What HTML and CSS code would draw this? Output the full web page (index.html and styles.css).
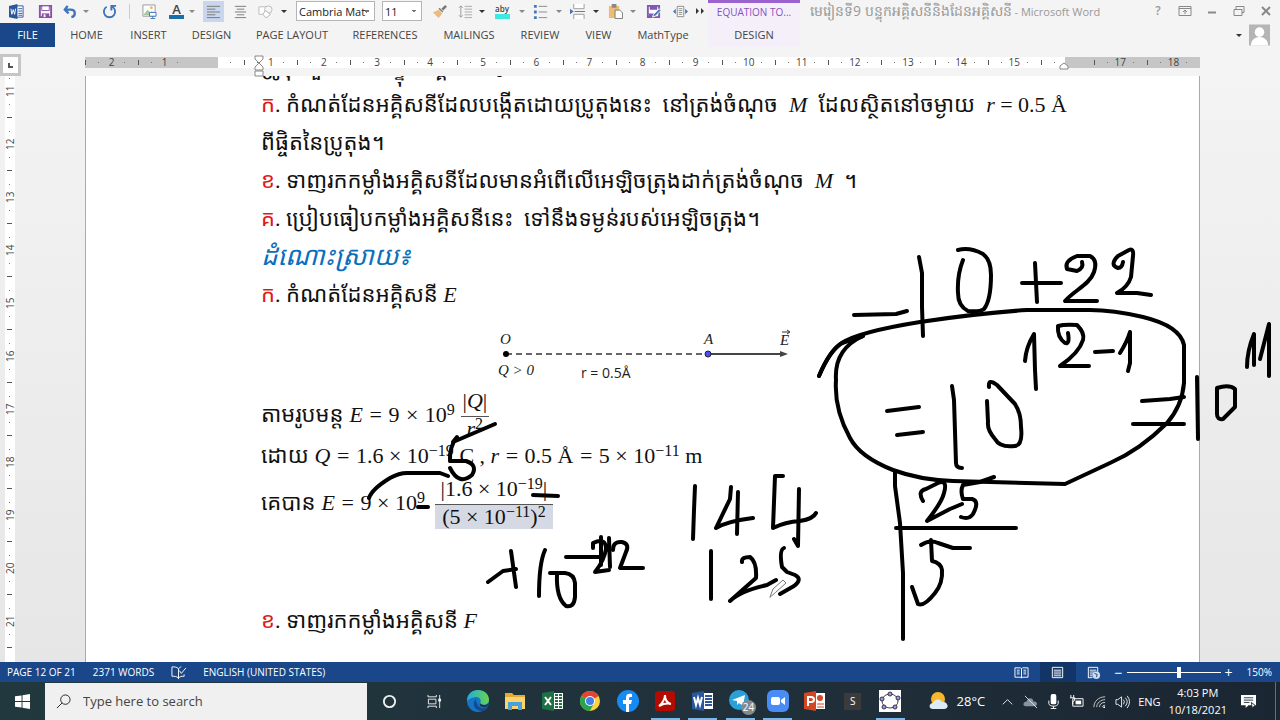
FILE: index.html
```
<!DOCTYPE html>
<html lang="km">
<head>
    <meta charset="UTF-8">
    <meta name="viewport" content="width=device-width, initial-scale=1.0">
    <title>មេរៀនទី9 - Microsoft Word</title>
    <link rel="stylesheet" href="styles.css">
</head>
<body>
    <!-- Quick access toolbar and title -->
    <header class="titlebar">
        <svg class="icon" viewBox="0 0 16 16"><path d="M8 2h7v12H8z" fill="#fff" stroke="#2b579a"/><path d="M10 5h4M10 7.500h4M10 10h4M10 12h4" stroke="#2b579a"/><path d="M0 2l9-2v16l-9-2z" fill="#2b579a"/><path d="M2 5l1 6 1.500-5L6 11l1-6" fill="none" stroke="#fff"/></svg>
        <button class="tool" aria-label="Save"><svg class="icon" viewBox="0 0 16 16"><path d="M2 2h12v12H2z" fill="#fff" stroke="#8a4fa8" stroke-width="2"/><path d="M4 2h8v5H4z" fill="#fff" stroke="#8a4fa8"/><path d="M4 10h8v4H4z" fill="#8a4fa8"/><path d="M6 11h2v3H6z" fill="#fff"/></svg></button>
        <button class="tool" aria-label="Undo"><svg class="icon" viewBox="0 0 16 16"><path d="M6 2L3 6l4 4M3 6h6c6 0 6 7 1 8" fill="none" stroke="#3f74b8" stroke-width="2.500"/></svg></button>
        <span class="caret"></span>
        <button class="tool" aria-label="Redo"><svg class="icon" viewBox="0 0 16 16"><path d="M5 3a6 6 0 1 0 6 0M10 7V2h5" fill="none" stroke="#3f74b8" stroke-width="2"/></svg></button>
        <span class="divider"></span>
        <button class="tool" aria-label="Picture"><svg class="icon" viewBox="0 0 16 16"><path d="M1 1h13v12H1z" fill="#fff" stroke="#999"/><path d="M2 11l4-5 3 3 2-2v5H2z" fill="#a5c9a0"/><circle cx="10" cy="4" r="1.500" fill="#e5b96d"/><path d="M8 9h7v4H8zM11.500 13v2M9 15.500h5" fill="#fff" stroke="#3f74b8"/></svg></button>
        <button class="tool font-color" aria-label="Font color">A</button>
        <span class="caret"></span>
        <button class="tool pressed" aria-label="Align left"><svg class="icon" viewBox="0 0 16 16"><path d="M1 2.500h14M1 5.500h9M1 8.500h14M1 11.500h9M1 14.500h14" stroke="#777"/></svg></button>
        <button class="tool" aria-label="Center"><svg class="icon" viewBox="0 0 16 16"><path d="M2 2.500h12M4 5.500h8M2 8.500h12M4 11.500h8M2 14.500h12" stroke="#777"/></svg></button>
        <button class="tool" aria-label="Shapes"><svg class="icon" viewBox="0 0 16 16"><path d="M1 3h8v8H1z" fill="#fff" stroke="#bbb"/><circle cx="11" cy="6" r="4" fill="#f5f5f5" stroke="#bbb"/><path d="M8 7l5 4-4 4-4-4z" fill="#fff" stroke="#aaa"/></svg></button>
        <span class="caret dark"></span>
        <select class="font-name" aria-label="Font"><option>Cambria Mat</option></select>
        <select class="font-size" aria-label="Font size"><option>11</option></select>
        <button class="tool" aria-label="Format painter"><svg class="icon" viewBox="0 0 16 16"><path d="M1 9l6-3 4 4-4 5z" fill="#e8bd7a"/><path d="M7 5l4 4 1-1-4-4zM10 5l4-4 2 2-4 4z" fill="#777"/></svg></button>
        <button class="tool" aria-label="Line spacing"><svg class="icon" viewBox="0 0 16 16"><path d="M3 2v12M1 4l2-2 2 2M1 12l2 2 2-2" fill="none" stroke="#999"/><path d="M7 2.500h8M7 5.500h8M7 8.500h8M7 11.500h8M7 14.500h8" stroke="#aaa"/></svg></button>
        <span class="caret dark"></span>
        <button class="tool highlight" aria-label="Highlight">aby</button>
        <span class="caret"></span>
        <button class="tool" aria-label="Bullets"><svg class="icon" viewBox="0 0 16 16"><path d="M1 1h3v3H1zM1 7h3v3H1zM1 13h3v3H1z" fill="#4a78b5"/><path d="M6 2.500h9M6 8.500h9M6 14.500h9" stroke="#888"/></svg></button>
        <span class="caret"></span>
        <button class="tool" aria-label="Breaks"><svg class="icon" viewBox="0 0 16 16"><path d="M4 0v5h11V0M4 16v-5h11v5" fill="#fff" stroke="#999"/><path d="M5 8h11" stroke="#4a78b5"/><path d="M0 5l4 3-4 3z" fill="#4a78b5"/></svg></button>
        <span class="caret dark"></span>
        <button class="tool" aria-label="Paste"><svg class="icon" viewBox="0 0 16 16"><path d="M1 2h11v13H1z" fill="#eebc74"/><path d="M4 0h5v4H4z" fill="#888"/><path d="M7.500 6.500h5l3 3v6h-8z" fill="#fff" stroke="#777"/></svg></button>
        <span class="caret"></span>
        <button class="tool" aria-label="Save as"><svg class="icon" viewBox="0 0 16 16"><path d="M2 2h12v12H2z" fill="#fff" stroke="#8355b5" stroke-width="2"/><path d="M4 2h8v4H4zM3 10h6v4H3z" fill="#8355b5"/><path d="M7 14l1-3 6-6 2 2-6 6z" fill="#4a78b5" stroke="#fff"/></svg></button>
        <button class="tool" aria-label="Page width"><svg class="icon" viewBox="0 0 16 16"><path d="M4.500 2.500h7v11h-7z" fill="#fff" stroke="#888"/><path d="M6 5h4M6 7h4M6 9h4M6 11h4" stroke="#888"/><path d="M3 5v6L0 8zM13 5v6l3-3z" fill="#4a78b5"/></svg></button>
        <button class="tool" aria-label="More"><svg class="icon small" viewBox="0 0 10 10"><path d="M1 2l3 3-3 3zM6 2l3 3-3 3z" fill="#333"/></svg></button>
        <span class="context-title">EQUATION TO...</span>
        <div class="title-area">
            <span class="doc-title"><span class="khmer">មេរៀនទី9 បន្ទុកអគ្គិសនីនិងដែនអគ្គិសនី</span> - Microsoft Word</span>
            <div class="window-buttons">
                <button class="tool help" aria-label="Help">?</button>
                <button class="tool" aria-label="Ribbon options"><svg class="icon" viewBox="0 0 14 14"><path d="M1 2.500h12v9H1zM1 4.500h12M7 10V6M5 8l2-2 2 2" fill="none" stroke="#888"/></svg></button>
                <button class="tool" aria-label="Minimize"><svg class="icon" viewBox="0 0 14 14"><path d="M3 8.500h8" stroke="#888" stroke-width="2"/></svg></button>
                <button class="tool" aria-label="Restore"><svg class="icon" viewBox="0 0 14 14"><path d="M2 5.500h8v6H2zM4 5V2.500h8v6h-2" fill="none" stroke="#888"/></svg></button>
                <button class="tool" aria-label="Close"><svg class="icon" viewBox="0 0 14 14"><path d="M3 3l8 8M11 3l-8 8" stroke="#888" stroke-width="2"/></svg></button>
            </div>
        </div>
    </header>

    <!-- Ribbon tabs -->
    <nav class="tabs">
        <a class="file" href="#">FILE</a>
        <a href="#">HOME</a>
        <a href="#">INSERT</a>
        <a href="#">DESIGN</a>
        <a href="#">PAGE LAYOUT</a>
        <a href="#">REFERENCES</a>
        <a href="#">MAILINGS</a>
        <a href="#">REVIEW</a>
        <a href="#">VIEW</a>
        <a href="#">MathType</a>
        <a class="context-tab" href="#">DESIGN</a>
        <div class="account">
            <span class="caret dark"></span>
            <svg class="avatar" viewBox="0 0 22 22"><path d="M0 0h22v22H0z" fill="#b5b5b5"/><circle cx="11" cy="8" r="5" fill="#fff"/><path d="M2 22c0-12 18-12 18 0z" fill="#fff"/></svg>
        </div>
    </nav>

    <main class="workspace">
        <div class="ruler-row">
            <div class="tab-stop"><span></span></div>
            <div class="ruler">
                <span class="shade">2</span><span class="shade">1</span><span class="shade-left">
                <svg class="indent" viewBox="0 0 10 22"><path d="M1 1h8v3L5 8l4 4v3H1v-3l4-4-4-4zM1 16h8v5H1z" fill="#fff" stroke="#888"/></svg></span><span>1</span><span>2</span><span>3</span><span>4</span><span>5</span><span>6</span><span>7</span><span>8</span><span>9</span><span>10</span><span>11</span><span>12</span><span>13</span><span>14</span><span>15</span><span class="shade-right">
                <svg class="indent-right" viewBox="0 0 10 8"><path d="M1 7V4l4-3 4 3v3z" fill="#fff" stroke="#888"/></svg></span><span class="shade">17</span><span class="shade">18</span>
            </div>
        </div>
        <div class="sheet-row">
            <div class="side-ruler">
                <span>11</span><span>12</span><span>13</span><span>14</span><span>15</span><span>16</span><span>17</span><span>18</span><span>19</span><span>20</span><span>21</span><span></span>
            </div>
            <article class="page">
                <p>ប្រូតុងមួយមានបន្ទុកអគ្គិសនី <i>Q</i></p>
                <p class="spread"><span><b>ក</b>. កំណត់ដែនអគ្គិសនីដែលបង្កើតដោយប្រូតុងនេះ</span> <span>នៅត្រង់ចំណុច</span> <i>M</i> <span>ដែលស្ថិតនៅចម្ងាយ</span> <span><i>r</i> = 0.5 Å</span></p>
                <p>ពីផ្ចិតនៃប្រូតុង។</p>
                <p><b>ខ</b>. ទាញរកកម្លាំងអគ្គិសនីដែលមានអំពើលើអេឡិចត្រុងដាក់ត្រង់ចំណុច&nbsp; <i>M</i>&nbsp; ។</p>
                <p><b>គ</b>. ប្រៀបធៀបកម្លាំងអគ្គិសនីនេះ&nbsp; ទៅនឹងទម្ងន់របស់អេឡិចត្រុង។</p>
                <p class="solution">ដំណោះស្រាយ៖</p>
                <p><b>ក</b>. កំណត់ដែនអគ្គិសនី <i>E</i></p>
                <svg class="diagram" viewBox="0 0 300 64">
                    <path d="M9 34h200" stroke="#666" stroke-width="2" stroke-dasharray="6 4"/>
                    <path d="M211 34h75" stroke="#444" stroke-width="2"/>
                    <path d="M283 31l8 3-8 3z" fill="#444"/>
                    <circle cx="9" cy="34" r="3" fill="#000"/>
                    <circle cx="211" cy="34" r="3" fill="#4d4dff" stroke="#223"/>
                    <text x="3" y="24" class="label">O</text>
                    <text x="1" y="55" class="label">Q &gt; 0</text>
                    <text x="207" y="24" class="label">A</text>
                    <text x="283" y="25" class="label">E</text>
                    <path d="M285 12h7M290 10l3 2-3 2" fill="none" stroke="#333"/>
                    <text x="84" y="58" class="distance">r = 0.5Å</text>
                </svg>
                <div class="formula">តាមរូបមន្ត <span class="math"><i>E</i> <span class="op">=</span> 9 <span class="op">×</span> 10<sup>9</sup></span>
                    <span class="fraction short"><span>|<i>Q</i>|</span><span><i>r</i><sup>2</sup></span></span>
                </div>
                <div class="formula given">ដោយ <span class="math"><i>Q</i> <span class="op">=</span> 1.6 × 10<sup>−19</sup> C , <i>r</i> <span class="op">=</span> 0.5 Å <span class="op">=</span> 5 × 10<sup>−11</sup> m</span></div>
                <div class="formula result">គេបាន <span class="math"><i>E</i> <span class="op">=</span> 9 × 10<sup>9</sup></span>
                    <span class="fraction wide"><span>|1.6 × 10<sup>−19</sup>|</span><span class="selected">(5 × 10<sup>−11</sup>)<sup>2</sup></span></span>
                </div>
                <p class="next"><b>ខ</b>. ទាញរកកម្លាំងអគ្គិសនី <i>F</i></p>
            </article>
        </div>
    </main>

    <!-- Word status bar -->
    <footer class="status">
        <span>PAGE 12 OF 21</span>
        <span>2371 WORDS</span>
        <svg class="icon" viewBox="0 0 16 16"><path d="M8 4v11M8 4C6 2 4 2 1 2v10c3 0 5 0 7 2 2-2 3-2 6-2v-2M8 4c1-1 2-2 3-2" fill="none" stroke="#fff"/><path d="M9 6l2 3 5-6" fill="none" stroke="#fff"/></svg>
        <span>ENGLISH (UNITED STATES)</span>
        <div class="view-controls">
            <button aria-label="Read mode"><svg class="icon" viewBox="0 0 16 16"><path d="M8 4v10M1 3h6l1 1 1-1h6v10H9l-1 1-1-1H1zM3 5.500h3M3 7.500h3M3 9.500h3M10 5.500h3M10 7.500h3M10 9.500h3" fill="none" stroke="#fff"/></svg></button>
            <button class="current" aria-label="Print layout"><svg class="icon" viewBox="0 0 16 16"><path d="M2.500 2.500h11v11h-11zM4 5.500h8M4 7.500h8M4 9.500h8M4 11.500h8" fill="none" stroke="#fff"/></svg></button>
            <button aria-label="Web layout"><svg class="icon" viewBox="0 0 16 16"><path d="M2.500 13.500v-11h10v5M4 5.500h7M4 7.500h6M4 9.500h4M4 11.500h3M2 13.500h5" fill="none" stroke="#fff"/><circle cx="11" cy="11" r="4" fill="#cfdcf0"/><path d="M9 9l3 1-1 3" fill="none" stroke="#19478a"/></svg></button>
            <label class="zoom">− <input type="range" min="10" max="190" value="110" aria-label="Zoom"> +</label>
            <span class="percent">150%</span>
        </div>
    </footer>

    <!-- Windows taskbar -->
    <footer class="taskbar">
        <button class="start" aria-label="Start"><svg class="icon" viewBox="0 0 16 16"><path d="M0 2.500l7-1v6H0zM8 1.300l8-1.300v7.500H8zM0 8.500h7v6l-7-1zM8 8.500h8V16l-8-1.300z" fill="#fff"/></svg></button>
        <label class="search">
            <svg class="icon" viewBox="0 0 16 16"><circle cx="10" cy="6" r="5" fill="none" stroke="#222"/><path d="M6.500 9.500L1 15" stroke="#222"/></svg>
            <input type="text" placeholder="Type here to search" aria-label="Search">
        </label>
        <button class="system" aria-label="Cortana"><svg class="icon" viewBox="0 0 16 16"><circle cx="8" cy="8" r="6" fill="none" stroke="#eee" stroke-width="2"/></svg></button>
        <button class="system" aria-label="Task view"><svg class="icon" viewBox="0 0 16 16"><path d="M1 1v2h9V1M1.500 5.500h8v5h-8zM1 15v-2h9v2M13.500 1v14" fill="none" stroke="#eee"/><path d="M12 5h3v3h-3z" fill="#eee"/></svg></button>
        <div class="apps">
            <button aria-label="Edge"><svg viewBox="0 0 24 24"><defs><linearGradient id="edge" x2="1"><stop stop-color="#1dade0"/><stop offset="1" stop-color="#6bd44a"/></linearGradient></defs><circle cx="12" cy="12" r="11" fill="#1674c5"/><path d="M1 12C1-3 23-2 23 11c0 5-7 6-9 3 2-2 0-6-4-6-5 0-9 4-9 4z" fill="url(#edge)"/><path d="M10 10c-5 5-1 12 6 12 3 0 5-2 6-4-6 3-12 0-12-8z" fill="#124b94"/><path d="M14 14c2 3 8 3 9-1-1 4-2 5-4 5-4 1-6-2-5-4z" fill="#20323c"/></svg></button>
            <button aria-label="Files"><svg viewBox="0 0 24 24"><path d="M2 4h7l2 2h11v14H2z" fill="#e8a933"/><path d="M2 8h20v12H2z" fill="#fbd56c"/><path d="M5 13h14v8h-4v-4H9v4H5z" fill="#4b9fdd"/></svg></button>
            <button aria-label="Excel"><svg viewBox="0 0 24 24"><path d="M12 4h10v16H12z" fill="#fff"/><path d="M14 6h3M18 6h3M14 9h3M18 9h3M14 12h3M18 12h3M14 15h3M18 15h3M14 18h3M18 18h3" stroke="#217346" stroke-width="2"/><path d="M1 4l12-2v20L1 20z" fill="#1e7145"/><path d="M4 8l6 8M10 8l-6 8" stroke="#fff" stroke-width="2"/></svg></button>
            <button aria-label="Chrome"><svg viewBox="0 0 24 24"><circle cx="12" cy="12" r="10" fill="#fdd23c"/><path d="M12 12L3.300 7a10 10 0 0 1 17.400 0z" fill="#e44435"/><path d="M12 12L3.300 7A10 10 0 0 0 12 22l4-8z" fill="#2fa24f"/><circle cx="12" cy="12" r="5" fill="#fff"/><circle cx="12" cy="12" r="4" fill="#4380ea"/></svg></button>
            <button aria-label="Facebook"><svg viewBox="0 0 24 24"><circle cx="12" cy="12" r="11" fill="#168af5"/><path d="M10 23v-8H7v-4h3V9c0-4 2-5 6-4v3c-3 0-3 0-3 3h3l-1 4h-2v8z" fill="#fff"/></svg></button>
            <button class="open" aria-label="Acrobat"><svg viewBox="0 0 24 24"><rect x="2" y="2" width="20" height="20" rx="3" fill="#b30b00"/><path d="M6 17c3-2 6-7 6-11 0 4 2 8 6 9-4-1-8 0-12 2z" fill="none" stroke="#fff" stroke-width="2"/></svg></button>
            <button class="open" aria-label="Word"><svg viewBox="0 0 24 24"><path d="M12 4h10v16H12z" fill="#fff"/><path d="M14 7h7M14 10h7M14 13h7M14 16h7" stroke="#2b579a" stroke-width="2"/><path d="M1 4l12-2v20L1 20z" fill="#2b579a"/><path d="M3 8l2 8 2-7 2 7 2-8" fill="none" stroke="#fff" stroke-width="2"/></svg></button>
            <button class="open" aria-label="Telegram"><svg viewBox="0 0 24 24"><circle cx="11" cy="11" r="10" fill="#2ba0d8"/><path d="M4 11l13-5-2 11-4-3-2 2v-4z" fill="#fff"/></svg><span class="badge">24</span></button>
            <button class="open" aria-label="Zoom"><svg viewBox="0 0 24 24"><rect x="1" y="1" width="22" height="22" rx="6" fill="#4a8cf5"/><rect x="5" y="8" width="9" height="8" rx="2" fill="#fff"/><path d="M15 11l4-3v8l-4-3z" fill="#fff"/></svg></button>
            <button aria-label="PowerPoint"><svg viewBox="0 0 24 24"><path d="M12 4h10v16H12z" fill="#fff"/><circle cx="17" cy="9" r="3" fill="#d24726"/><path d="M14 15h7M14 18h7" stroke="#d24726"/><path d="M1 4l12-2v20L1 20z" fill="#d24726"/><path d="M5 17V8h3c4 0 4 5 0 5H5" fill="none" stroke="#fff" stroke-width="2"/></svg></button>
            <button aria-label="Sketchpad"><span class="letter">S</span></button>
            <button class="open" aria-label="GeoGebra"><svg viewBox="0 0 24 24"><path d="M1 1h22v22H1z" fill="#fff"/><ellipse cx="12" cy="12" rx="8" ry="7" fill="none" stroke="#444"/><g fill="#9a9af0" stroke="#334"><circle cx="12" cy="5" r="2"/><circle cx="20" cy="9" r="2"/><circle cx="17" cy="18" r="2"/><circle cx="6" cy="18" r="2"/><circle cx="4" cy="10" r="2"/></g></svg></button>
        </div>
        <div class="tray">
            <svg class="weather" viewBox="0 0 20 20"><circle cx="9" cy="8" r="7" fill="#f9b82c"/><path d="M4 18c-5 0-4-6 0-6 1-4 7-5 9-1 6-1 8 7 2 7z" fill="#dcebf7"/></svg>
            <span class="temperature">28°C</span>
            <svg class="icon" viewBox="0 0 16 16"><path d="M3 11l5-5 5 5" fill="none" stroke="#eee"/></svg>
            <svg class="icon" viewBox="0 0 16 16"><path d="M3 13c-4 0-3-5 1-5 1-5 7-4 7 0 5-1 5 5 1 5z" fill="#89939c"/><path d="M2 2l13 13" stroke="#ddd"/></svg>
            <svg class="icon" viewBox="0 0 16 16"><rect x="5" y="0" width="6" height="11" rx="2" fill="#fff"/><path d="M3 7v3c0 4 10 4 10 0V7M8 13v3M5 15.500h6" fill="none" stroke="#fff"/></svg>
            <svg class="icon" viewBox="0 0 16 16"><path d="M4 5h11v8H4zM2 1v3M5 1v3M1 4h5v3l-2 1v3" fill="none" stroke="#fff"/><path d="M7 7h6v4H7z" fill="#fff"/></svg>
            <svg class="icon" viewBox="0 0 16 16"><path d="M2 14C2 8 7 3 14 3M5 14c0-4 4-8 9-8M8 14c0-3 2-5 6-5M11 14c0-1 1-2 3-2" fill="none" stroke="#ccc"/><circle cx="13" cy="14" r="1" fill="#fff"/></svg>
            <svg class="icon" viewBox="0 0 16 16"><path d="M1 6h2l4-3v11l-4-3H1zM9 6q2 2 0 5M11 4q4 4 0 9M13 2q5 6 0 13" fill="none" stroke="#eee"/></svg>
            <span class="language">ENG</span>
            <time class="clock">4:03 PM<br>10/18/2021</time>
            <svg class="icon notice" viewBox="0 0 16 16"><path d="M0 1h16v11H8l-3 3v-3H0z" fill="#fff"/><path d="M3 4h10M3 6.500h10M3 9h6" stroke="#26343d"/><path d="M11 9l4 3-3 3z" fill="#fff" stroke="#26343d"/></svg>
            <span class="show-desktop"></span>
        </div>
    </footer>

    <!-- Pen strokes over the document -->
    <svg class="ink" viewBox="0 0 1280 720">
        <path d="M854 315L896 314 907 311M919 257L922 273 922 307 923 336"/>
        <path d="M958 250Q970 247 983 254Q991 260 991 275Q991 300 984 309Q980 312 968 311Q958 306 958 293Q957 275 963 260"/>
        <path d="M1022 283H1061M1035 263L1037 302"/>
        <path d="M1082 262Q1084 268 1077 271L1067 269Q1064 261 1077 256H1090Q1098 260 1094 272C1090 284 1075 290 1065 301H1097"/>
        <path d="M1123 262Q1122 268 1118 268Q1109 265 1118 256L1129 250Q1134 248 1133 256L1131 277Q1128 287 1117 293H1137L1151 295"/>
        <path d="M819 376Q830 350 842 343Q858 332 920 322Q980 313 1027 310H1090Q1113 310 1143 317Q1180 326 1184 345V383Q1182 406 1167 423Q1140 450 1110 463L1065 484L953 481Q920 480 893 470Q860 457 850 438Q834 409 836 380Q834 349 863 336"/>
        <path d="M819 376Q830 350 842 343L863 336"/>
        <path d="M887 411L919 407M897 435L923 432M952 386L954 400 956 463Q956 468 962 468"/>
        <path d="M989 387Q988 378 997 385L1015 404Q1021 413 1021 427Q1023 445 1015 446Q1000 448 995 439Q987 430 988 422L987 401"/>
        <path d="M1025 361Q1026 347 1034 334L1035 370 1036 389"/>
        <path d="M1068 333Q1070 345 1065 343Q1057 337 1058 326Q1065 324 1077 325Q1085 333 1083 340Q1079 353 1060 366H1089"/>
        <path d="M1095 352L1113 351M1120 353Q1127 342 1130 332V363L1128 371"/>
        <path d="M1142 401L1170 399 1184 397M1133 424H1184M1197 377L1198 439"/>
        <path d="M1217 388Q1229 384 1235 389V407L1223 419Q1217 420 1217 414ZM1247 367Q1247 351 1254 334V365M1260 359L1269 324V376"/>
        <path d="M695 486L694 510 693 539M731 487L730 499 716 528Q728 521 753 518M738 492L737 534"/>
        <path d="M783 476L775 476 773 528Q785 522 800 521Q813 519 816 513M799 489L798 546 794 539"/>
        <path d="M711 551V599M742 562Q741 557 750 557Q757 562 756 578L730 601Q740 591 767 585L776 580"/>
        <path d="M784 548Q779 550 782 567L787 572 795 575Q803 579 794 586L780 594"/>
        <path d="M895 472V486L900 523 903 573V639M896 528H1016"/>
        <path d="M923 501Q917 491 926 489L938 483Q948 479 944 493Q942 502 927 521L950 509 962 504"/>
        <path d="M994 477L980 482 963 485Q960 491 963 499H972Q980 501 973 514Q969 520 961 517"/>
        <path d="M970 548H953L938 543Q930 539 921 545M931 540L932 561Q941 563 942 570Q943 583 935 593Q924 607 918 604L912 587"/>
        <path d="M495 424L453 442 457 437Q449 447 450 461H466Q478 465 472 475Q459 486 450 468"/>
        <path d="M369 498Q372 489 390 478Q399 473 407 473H440L448 476M418 507H428M533 495L558 496"/>
        <path d="M488 582L503 571 516 569M511 551L516 587M545 550Q539 563 539 596"/>
        <path d="M550 573H565Q574 574 575 583V597Q574 608 566 606Q556 598 557 574"/>
        <path d="M566 557H603M593 548V543Q606 537 606 549Q604 561 595 572L609 570M601 537V565M609 538L610 567"/>
        <path d="M613 550Q613 541 622 542Q630 544 626 552L620 568H643"/>
        <path class="pencil" d="M770 597L773 589 783 580 786 583 776 592Z"/>
    </svg>
</body>
</html>
```
FILE: styles.css
```
* {
    box-sizing: border-box;
}
body {
    margin: 0;
    height: 100vh;
    display: flex;
    flex-direction: column;
    overflow: hidden;
    background-color: #f4f4f4;
    font-family: "Open Sans", "Noto Sans", sans-serif;
    font-size: 11px;
    color: #444;
}
button {
    border: none;
    padding: 0;
    background: none;
    font-family: inherit;
    color: inherit;
}
.icon {
    width: 15px;
    height: 15px;
    display: block;
    flex: none;
}
.icon.small {
    width: 10px;
    height: 10px;
}
.caret {
    border: 3px solid transparent;
    border-top-color: #888;
    border-bottom: none;
}
.caret.dark {
    border-top-color: #333;
}

/* Title bar */
.titlebar {
    height: 22px;
    flex: none;
    display: grid;
    grid-template-columns: 33px 24px 25px 7px 40px 1px 39px 15px 16px 27px 27px 23px 13px 91px 42px 32px 20px 14px 26px 14px 22px 16px 21px 15px 24px 11px 30px 24px 16px 92px 1fr;
    align-items: center;
    justify-items: center;
}
.divider {
    width: 1px;
    height: 15px;
    background-color: #ccc;
}
.font-color {
    width: 15px;
    border-bottom: 4px solid #1b6fa8;
    font-size: 13px;
    font-weight: 600;
    line-height: 12px;
}
.highlight {
    width: 15px;
    border-bottom: 5px solid #3fe8e0;
    font-size: 8px;
    font-weight: 600;
    line-height: 10px;
}
.pressed {
    padding: 3px;
    background-color: #c9d6ee;
}
.titlebar select {
    height: 20px;
    padding: 0 0 0 2px;
    border: 1px solid #b5b5b5;
    border-radius: 0;
    appearance: none;
    background-color: #fff;
    background-image: linear-gradient(45deg, transparent 50%, #777 50%), linear-gradient(-45deg, transparent 50%, #777 50%);
    background-repeat: no-repeat;
    background-size: 3px 3px;
    background-position: right 7px center, right 4px center;
    background-image: linear-gradient(45deg, transparent 50%, #777 50%), linear-gradient(-45deg, transparent 50%, #777 50%);
    color: #222;
    font-family: "Open Sans", sans-serif;
    font-size: 11px;
}
.font-name {
    width: 79px;
}
.font-size {
    width: 40px;
}
.context-title {
    width: 100%;
    height: 22px;
    border-top: 3px solid #9a62cf;
    background-color: #f5effa;
    color: #8a4fc0;
    font-size: 10px;
    line-height: 19px;
    text-align: center;
    white-space: nowrap;
}
.title-area {
    width: 100%;
    display: flex;
    align-items: center;
    justify-content: space-between;
    padding-left: 10px;
    white-space: nowrap;
}
.doc-title {
    color: #999;
    line-height: 20px;
}
.khmer {
    font-size: 14px;
}
.window-buttons {
    display: flex;
    gap: 13px;
    padding-right: 7px;
}
.window-buttons .icon {
    width: 14px;
    height: 14px;
}
.help {
    width: 14px;
    color: #999;
    font-size: 12px;
    line-height: 14px;
    font-weight: 600;
}

/* Ribbon tabs */
.tabs {
    height: 25px;
    flex: none;
    display: grid;
    grid-template-columns: 55px 63px 61px 65px 96px 90px 78px 64px 53px 76px 106px 1fr;
}
.tabs a {
    color: #444;
    text-align: center;
    text-decoration: none;
    line-height: 26px;
    white-space: nowrap;
}
.tabs .file {
    margin-top: 1px;
    background-color: #19478a;
    color: #fff;
    line-height: 24px;
}
.tabs .context-tab {
    margin: 0 7px;
    background-color: #f5effa;
}
.account {
    display: flex;
    align-items: center;
    justify-content: flex-end;
    gap: 7px;
    padding-right: 10px;
}
.avatar {
    width: 21px;
    height: 22px;
}

/* Rulers and page */
.workspace {
    flex: 1;
    min-height: 0;
    display: flex;
    flex-direction: column;
    background: linear-gradient(#f4f4f4, #e6e6e6);
}
.ruler-row {
    height: 29px;
    flex: none;
    display: flex;
    align-items: flex-end;
}
.tab-stop {
    width: 21px;
    height: 22px;
    border: 3px solid #c6c6c6;
    background-color: #fff;
    display: flex;
    align-items: center;
    justify-content: center;
}
.tab-stop span {
    width: 5px;
    height: 5px;
    border: solid #555;
    border-width: 0 0 2px 2px;
}
.ruler {
    flex: 1;
    height: 11px;
    margin: 0 80px 8px 64px;
    display: flex;
    background-color: #fff;
}
.ruler > span {
    flex: 1;
    display: flex;
    align-items: center;
    justify-content: center;
    background-image: linear-gradient(#555, #555), linear-gradient(#777, #777), linear-gradient(#777, #777);
    background-repeat: no-repeat;
    background-size: 1px 5px, 1px 1px, 1px 1px;
    background-position: left center, 25% center, 75% center;
    font-size: 10px;
    line-height: 11px;
}
.ruler .shade {
    background-color: #c6c6c6;
}
.ruler .shade-left {
    box-shadow: inset 27px 0 #c6c6c6;
}
.ruler .shade-right {
    box-shadow: inset -29px 0 #c6c6c6;
}
.indent {
    position: absolute;
    top: 55px;
    left: 254px;
    width: 10px;
    height: 22px;
}
.indent-right {
    width: 10px;
    height: 8px;
    margin: 6px 7px 0 0;
    flex: none;
}
.sheet-row {
    flex: 1;
    min-height: 0;
    display: flex;
    overflow: hidden;
}
.side-ruler {
    width: 10px;
    margin: -11px 70px 0 5px;
    flex: none;
    background-color: #fff;
}
.side-ruler span {
    height: 53px;
    display: flex;
    align-items: center;
    justify-content: center;
    writing-mode: vertical-rl;
    transform: rotate(180deg);
    background-image: linear-gradient(#555, #555), linear-gradient(#777, #777), linear-gradient(#777, #777);
    background-repeat: no-repeat;
    background-size: 5px 1px, 1px 1px, 1px 1px;
    background-position: center top, center 25%, center 75%;
    font-size: 10px;
    line-height: 10px;
}
.page {
    flex: 1;
    margin-right: 80px;
    padding: 0 132px 0 175px;
    border: solid #aaa;
    border-width: 0 1px;
    background-color: #fff;
    color: #111;
    font-family: "Liberation Serif", "Khmer OS Siemreap", "Noto Sans Khmer", "Khmer OS", serif;
    font-size: 22px;
    line-height: 38px;
    white-space: nowrap;
}
.page p {
    height: 38px;
    margin: 0;
}
.page p:first-child {
    margin-top: -28px;
}
.page .spread {
    display: flex;
    justify-content: space-between;
}
.page b {
    color: #e01818;
    font-weight: normal;
}
.page .solution {
    color: #0b6fba;
    font-size: 26px;
    font-style: italic;
}
.diagram {
    display: block;
    width: 300px;
    height: 64px;
    margin: 6px 0 8px 236px;
}
.diagram text {
    fill: #222;
}
.label {
    font: italic 15px "Liberation Serif", serif;
}
.distance {
    font: 14px "Open Sans", sans-serif;
}
.op {
    margin: 0 1px;
}
sup {
    font-size: 16px;
    line-height: 0;
    vertical-align: 7px;
}
.formula {
    height: 46px;
    display: flex;
    align-items: center;
    gap: 6px;
}
.formula.given {
    height: 36px;
}
.formula.result {
    height: 58px;
}
.fraction {
    display: flex;
    flex-direction: column;
    align-items: center;
    line-height: 24px;
}
.fraction span:first-child {
    width: 100%;
    padding-bottom: 3px;
    border-bottom: 1px solid #555;
    text-align: center;
}
.fraction .selected {
    background-color: #d5d9e3;
}
.short {
    width: 28px;
}
.wide {
    width: 118px;
    margin-left: 4px;
}
.wide .selected {
    width: 100%;
    text-align: center;
    line-height: 24px;
}
.page .next {
    margin-top: 70px;
}

/* Status bar */
.status {
    height: 20px;
    flex: none;
    display: flex;
    align-items: center;
    gap: 17px;
    padding: 0 8px 0 7px;
    background-color: #19478a;
    color: #fff;
    font-size: 10px;
    white-space: nowrap;
}
.view-controls {
    display: flex;
    align-items: center;
    margin-left: auto;
}
.view-controls button {
    width: 36px;
    height: 20px;
    display: flex;
    align-items: center;
    justify-content: center;
}
.view-controls .current {
    background-color: #123466;
}
.zoom {
    display: flex;
    align-items: center;
    gap: 4px;
    margin: 0 14px 0 3px;
    font-size: 14px;
}
.zoom input {
    width: 94px;
    height: 12px;
    margin: 0;
    appearance: none;
    background: linear-gradient(#fff, #fff) center / 100% 1px no-repeat;
}
.zoom input::-webkit-slider-thumb {
    appearance: none;
    width: 4px;
    height: 11px;
    background-color: #fff;
}

/* Taskbar */
.taskbar {
    height: 38px;
    flex: none;
    display: flex;
    align-items: center;
    background: linear-gradient(90deg, #20383e, #20303b 60%, #1a2632);
    color: #fff;
    font-size: 11px;
    white-space: nowrap;
}
.start {
    width: 45px;
    display: flex;
    justify-content: center;
}
.search {
    width: 322px;
    height: 37px;
    display: flex;
    align-items: center;
    gap: 10px;
    padding-left: 11px;
    background-color: #f0f0f0;
}
.search input {
    flex: 1;
    min-width: 0;
    border: none;
    background: none;
    font-family: "Open Sans", sans-serif;
    font-size: 13px;
}
.search input::placeholder {
    color: #444;
}
.system {
    width: 45px;
    display: flex;
    justify-content: center;
}
.apps {
    flex: 0 0 450px;
    height: 38px;
    margin-left: 2px;
    display: flex;
}
.apps button {
    flex: 1;
    position: relative;
    display: flex;
    align-items: center;
    justify-content: center;
}
.apps svg {
    width: 24px;
    height: 24px;
}
.apps .open {
    background: linear-gradient(#76b9ed, #76b9ed) center bottom / 29px 2px no-repeat;
}
.badge {
    position: absolute;
    right: 3px;
    bottom: 5px;
    width: 15px;
    height: 15px;
    border-radius: 50%;
    background-color: #84898c;
    font-size: 10px;
    line-height: 15px;
    text-align: center;
}
.letter {
    width: 17px;
    background-color: #3b3b3b;
    font-size: 10px;
    line-height: 17px;
}
.tray {
    flex: 1;
    display: flex;
    align-items: center;
    justify-content: flex-end;
    gap: 8px;
}
.weather {
    width: 20px;
    height: 20px;
}
.temperature {
    margin-right: 7px;
    font-size: 13px;
}
.clock {
    line-height: 17px;
    text-align: center;
}
.notice {
    margin: 0 11px 0 6px;
}
.show-desktop {
    width: 5px;
    height: 38px;
    border-left: 1px solid #66717a;
}

/* Pen layer */
.ink {
    position: absolute;
    top: 0;
    left: 0;
    width: 1280px;
    height: 720px;
    pointer-events: none;
    fill: none;
    stroke: #000;
    stroke-width: 4;
    stroke-linecap: round;
    stroke-linejoin: round;
}
.ink .pencil {
    fill: #fff;
    stroke: #777;
    stroke-width: 1;
}
```
